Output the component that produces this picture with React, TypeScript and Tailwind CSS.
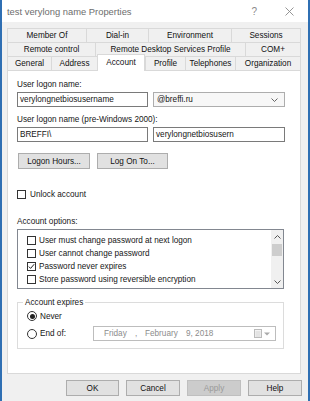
import React from "react";

const font = { fontFamily: '"Liberation Sans", Arial, sans-serif' };

function Tab({ w, label, sel, last }: { w: number; label: string; sel?: boolean; last?: boolean }) {
  if (sel) {
    return (
      <div
        style={{ width: w }}
        className="relative z-10 h-[17px] -mb-px bg-white border-l border-r border-t border-[#d9d9d9] flex items-start justify-center pt-[2px] text-[8.2px] leading-[11px] text-[#111]"
      >
        {label}
      </div>
    );
  }
  return (
    <div
      style={{ width: w }}
      className={`h-[14px] bg-[#f0f0f0] border-t border-l border-[#d9d9d9] ${last ? "border-r" : ""} flex items-center justify-center text-[8.2px] leading-[11px] text-[#111]`}
    >
      {label}
    </div>
  );
}

function Check({ checked }: { checked?: boolean }) {
  return (
    <div className="w-[9px] h-[9px] border border-[#333] bg-white flex items-center justify-center shrink-0">
      {checked && (
        <svg width="7" height="7" viewBox="0 0 7 7">
          <path d="M0.8 3.6 L2.6 5.4 L6.2 1.2" fill="none" stroke="#222" strokeWidth="1" />
        </svg>
      )}
    </div>
  );
}

function Radio({ on }: { on?: boolean }) {
  return (
    <div className="w-[10px] h-[10px] rounded-full border border-[#333] bg-white flex items-center justify-center shrink-0">
      {on && <div className="w-[5px] h-[5px] rounded-full bg-[#222]" />}
    </div>
  );
}

function Btn({ label, w, disabled }: { label: string; w: number; disabled?: boolean }) {
  return (
    <div
      style={{ width: w }}
      className={`h-[16px] border flex items-center justify-center text-[8.2px] leading-[11px] ${
        disabled ? "bg-[#cccccc] border-[#bfbfbf] text-[#9a9a9a]" : "bg-[#e1e1e1] border-[#adadad] text-[#111]"
      }`}
    >
      {label}
    </div>
  );
}

export default function App() {
  return (
    <div style={font} className="w-[310px] h-[401px] bg-[#f0f0f0] border-l-2 border-r-2 border-[#2f6fb3] flex flex-col overflow-hidden text-[#161616]">
      {/* title bar */}
      <div className="h-[22px] bg-white flex items-center pl-[5px] pr-[8px] shrink-0">
        <span className="text-[9.4px] text-[#6d6d6d] leading-[12px] pt-[2px]">test verylong name Properties</span>
        <span className="ml-auto text-[10px] text-[#8a8a8a] mr-[28px]">?</span>
        <svg width="9" height="9" viewBox="0 0 9 9" className="mr-[6px]">
          <path d="M0.5 0.5 L8.5 8.5 M8.5 0.5 L0.5 8.5" stroke="#8a8a8a" strokeWidth="0.9" />
        </svg>
      </div>

      {/* tabs */}
      <div className="ml-[5px] mt-[6px] w-[294px] flex flex-col">
        <div className="flex">
          <Tab w={79} label="Member Of" />
          <Tab w={62} label="Dial-in" />
          <Tab w={83} label="Environment" />
          <Tab w={70} label="Sessions" last />
        </div>
        <div className="flex">
          <Tab w={88} label="Remote control" />
          <Tab w={150} label="Remote Desktop Services Profile" />
          <Tab w={56} label="COM+" last />
        </div>
        <div className="flex items-end h-[14px]">
          <Tab w={44} label="General" />
          <Tab w={46} label="Address" />
          <Tab w={48} label="Account" sel />
          <Tab w={40} label="Profile" />
          <Tab w={50} label="Telephones" />
          <Tab w={66} label="Organization" last />
        </div>
      </div>

      {/* panel */}
      <div className="ml-[5px] w-[294px] h-[304px] bg-white border border-[#d9d9d9] pl-[9px] pt-[8px] flex flex-col text-[8.2px] leading-[11px]">
        <div>User logon name:</div>
        <div className="flex mt-[2px] gap-[5px]">
          <div className="w-[131px] h-[15px] border border-[#7a7a7a] px-[2px] flex items-center">verylongnetbiosusername</div>
          <div className="w-[132px] h-[15px] border border-[#adadad] bg-[#f7f7f7] px-[3px] flex items-center">
            <span>@breffi.ru</span>
            <svg width="7" height="4" viewBox="0 0 7 4" className="ml-auto mr-[3px]">
              <path d="M0.5 0.5 L3.5 3.5 L6.5 0.5" fill="none" stroke="#555" strokeWidth="0.9" />
            </svg>
          </div>
        </div>
        <div className="mt-[7px]">User logon name (pre-Windows 2000):</div>
        <div className="flex mt-[2px] gap-[5px]">
          <div className="w-[131px] h-[15px] border border-[#7a7a7a] px-[2px] flex items-center">BREFFI\</div>
          <div className="w-[132px] h-[15px] border border-[#7a7a7a] px-[2px] flex items-center">verylongnetbiosusern</div>
        </div>
        <div className="flex mt-[11px] gap-[7px] pl-px">
          <Btn label="Logon Hours..." w={72} />
          <Btn label="Log On To..." w={71} />
        </div>
        <div className="flex items-center gap-[4px] mt-[20px]">
          <Check />
          <span>Unlock account</span>
        </div>
        <div className="mt-[16px]">Account options:</div>
        <div className="mt-[2px] w-[267px] h-[60px] border border-[#828790] flex">
          <div className="flex-1 pl-[9px] pt-[4px] flex flex-col gap-[1px]">
            <div className="flex items-center gap-[3px] h-[12px]"><Check /><span>User must change password at next logon</span></div>
            <div className="flex items-center gap-[3px] h-[12px]"><Check /><span>User cannot change password</span></div>
            <div className="flex items-center gap-[3px] h-[12px]"><Check checked /><span>Password never expires</span></div>
            <div className="flex items-center gap-[3px] h-[12px]"><Check /><span>Store password using reversible encryption</span></div>
          </div>
          <div className="w-[12px] bg-[#f0f0f0] flex flex-col items-center">
            <div className="h-[13px] flex items-center">
              <svg width="7" height="4" viewBox="0 0 7 4">
                <path d="M0.5 3.5 L3.5 0.5 L6.5 3.5" fill="none" stroke="#555" strokeWidth="1" />
              </svg>
            </div>
            <div className="w-[10px] h-[12px] bg-[#cdcdcd] mt-[1px]" />
            <div className="mt-auto h-[13px] flex items-center">
              <svg width="7" height="4" viewBox="0 0 7 4">
                <path d="M0.5 0.5 L3.5 3.5 L6.5 0.5" fill="none" stroke="#555" strokeWidth="1" />
              </svg>
            </div>
          </div>
        </div>

        {/* group box */}
        <div className="relative mt-[13px] w-[267px] h-[47px] border border-[#dcdcdc] pl-[9px] pt-[6px] flex flex-col">
          <span className="absolute -top-[6px] left-[5px] bg-white px-[2px]">Account expires</span>
          <div className="flex items-center gap-[3px] h-[14px]">
            <Radio on />
            <span>Never</span>
          </div>
          <div className="flex items-center mt-[3px] h-[15px]">
            <Radio />
            <span className="ml-[3px] w-[53px]">End of:</span>
            <div className="w-[183px] h-[15px] border border-[#bdbdbd] flex items-center text-[#8c8c8c]">
              <span className="ml-[10px] w-[31px]">Friday</span>
              <span className="w-[10px]">,</span>
              <span className="w-[41px]">February</span>
              <span>9, 2018</span>
              <svg width="8" height="9" viewBox="0 0 8 9" className="ml-auto">
                <rect x="0.5" y="0.5" width="7" height="8" fill="#f4f4f4" stroke="#bbb" />
                <path d="M1.5 3 H6.5 M1.5 5 H6.5 M1.5 7 H6.5" stroke="#ccc" strokeWidth="0.8" />
              </svg>
              <svg width="6" height="4" viewBox="0 0 6 4" className="ml-[2px] mr-[5px]">
                <path d="M0 0.5 L6 0.5 L3 3.5 Z" fill="#aaa" />
              </svg>
            </div>
          </div>
        </div>
      </div>

      {/* bottom buttons */}
      <div className="flex mt-[6px] ml-[64px] gap-[7px]">
        <Btn label="OK" w={53} />
        <Btn label="Cancel" w={54} />
        <Btn label="Apply" w={54} disabled />
        <Btn label="Help" w={54} />
      </div>
    </div>
  );
}
